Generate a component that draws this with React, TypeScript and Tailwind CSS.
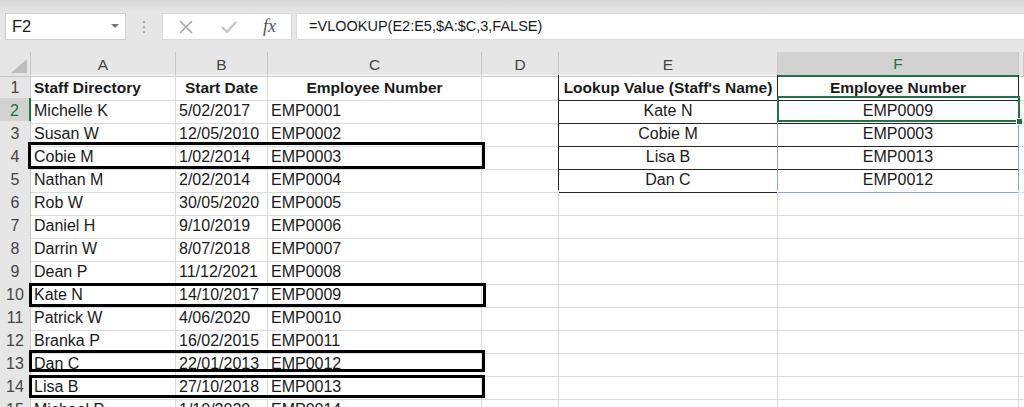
import React from 'react';

type Row = { n: number; cells: string[] };

const rows: Row[] = [
    { n: 1, cells: ['Staff Directory', 'Start Date', 'Employee Number', '', "Lookup Value (Staff's Name)", 'Employee Number'] },
    { n: 2, cells: ['Michelle K', '5/02/2017', 'EMP0001', '', 'Kate N', 'EMP0009'] },
    { n: 3, cells: ['Susan W', '12/05/2010', 'EMP0002', '', 'Cobie M', 'EMP0003'] },
    { n: 4, cells: ['Cobie M', '1/02/2014', 'EMP0003', '', 'Lisa B', 'EMP0013'] },
    { n: 5, cells: ['Nathan M', '2/02/2014', 'EMP0004', '', 'Dan C', 'EMP0012'] },
    { n: 6, cells: ['Rob W', '30/05/2020', 'EMP0005', '', '', ''] },
    { n: 7, cells: ['Daniel H', '9/10/2019', 'EMP0006', '', '', ''] },
    { n: 8, cells: ['Darrin W', '8/07/2018', 'EMP0007', '', '', ''] },
    { n: 9, cells: ['Dean P', '11/12/2021', 'EMP0008', '', '', ''] },
    { n: 10, cells: ['Kate N', '14/10/2017', 'EMP0009', '', '', ''] },
    { n: 11, cells: ['Patrick W', '4/06/2020', 'EMP0010', '', '', ''] },
    { n: 12, cells: ['Branka P', '16/02/2015', 'EMP0011', '', '', ''] },
    { n: 13, cells: ['Dan C', '22/01/2013', 'EMP0012', '', '', ''] },
    { n: 14, cells: ['Lisa B', '27/10/2018', 'EMP0013', '', '', ''] },
    { n: 15, cells: ['Michael P', '1/10/2020', 'EMP0014', '', '', ''] },
];

const GRID = 'grid grid-cols-[31px_145px_92px_214px_77px_219px_241px_5px]';
const letters = ['A', 'B', 'C', 'D', 'E', 'F', ''];

// border colour of a data cell (col index 0..6 = A..G)
function cellBorders(r: number, c: number) {
    const inTable = r <= 5;
    let right = 'border-r-[#dadcdd]';
    let bottom = 'border-b-[#dadcdd]';
    if (inTable && c === 3) right = 'border-r-[#262626]';
    if (inTable && c === 4) {
        right = r <= 2 ? 'border-r-[#262626]' : 'border-r-[#8ba6dc]';
        bottom = 'border-b-[#262626]';
    }
    if (inTable && c === 5) {
        right = r <= 2 ? 'border-r-[#262626]' : 'border-r-[#8ba6dc]';
        bottom = r === 5 ? 'border-b-[#8ba6dc]' : 'border-b-[#262626]';
    }
    return `${right} ${bottom}`;
}

const Caret = () => (
    <svg width="8" height="5" viewBox="0 0 8 5"><path d="M0 0 L8 0 L4 4 Z" fill="#777" /></svg>
);

export default function App() {
    return (
        <div className="relative w-[1024px] h-[407px] overflow-hidden bg-white text-[#1a1a1a] font-['Liberation_Sans',Arial,sans-serif]">
            {/* formula bar */}
            <div className="h-[52px] bg-[#e6e6e6] relative">
                <div className="absolute inset-x-0 top-0 h-[12px] bg-gradient-to-b from-[#d6d6d6] to-[#e6e6e6]" />
                <div className="relative flex items-start pt-[13px] pl-[5px]">
                    <div className="w-[121px] h-[27px] bg-white border border-[#cfcfcf] flex items-center justify-between pl-[6px] pr-[6px] text-[16.5px]">
                        <span>F2</span>
                        <Caret />
                    </div>
                    <div className="w-[36px] h-[27px] flex flex-col items-center justify-center gap-[3px]">
                        <div className="w-[2px] h-[2px] bg-[#a8a8a8]" />
                        <div className="w-[2px] h-[2px] bg-[#a8a8a8]" />
                        <div className="w-[2px] h-[2px] bg-[#a8a8a8]" />
                    </div>
                    <div className="w-[130px] h-[27px] bg-white border border-[#d9d9d9] flex items-center pl-[16px]">
                        <svg width="14" height="14" viewBox="0 0 14 14"><path d="M1 1 L13 13 M13 1 L1 13" stroke="#a6a6a6" strokeWidth="1.6" /></svg>
                        <svg className="ml-[28px]" width="16" height="14" viewBox="0 0 16 14"><path d="M1 7 L6 12 L15 2" stroke="#c4c4c4" strokeWidth="2.2" fill="none" /></svg>
                        <span className="ml-[26px] font-['Liberation_Serif',serif] italic text-[18px] text-[#555]">fx</span>
                    </div>
                    <div className="ml-[4px] flex-1 h-[27px] bg-white border-y border-l border-[#d9d9d9] flex items-center pl-[12px] text-[14.5px]">
                        =VLOOKUP(E2:E5,$A:$C,3,FALSE)
                    </div>
                </div>
            </div>

            {/* column headers */}
            <div className={`${GRID} h-[23px] bg-[#e6e6e6] text-[15.5px] text-[#444]`}>
                <div className="relative border-r border-b border-[#c8c8c8]">
                    <svg className="absolute right-[3px] bottom-[3px]" width="16" height="14" viewBox="0 0 16 14"><path d="M16 0 L16 14 L0 14 Z" fill="#bdbdbd" /></svg>
                </div>
                {letters.map((l, i) =>
                    l === 'F' ? (
                        <div key={i} className="flex items-center justify-center bg-[#d2d2d2] text-[#217346] border-r border-[#c8c8c8] border-b-2 border-b-[#217346]">{l}</div>
                    ) : (
                        <div key={i} className="flex items-center justify-center border-r border-b border-[#c8c8c8]">{l}</div>
                    )
                )}
            </div>

            {/* rows */}
            {rows.map((row) => (
                <div key={row.n} className={`${GRID} h-[23px] text-[16px]`}>
                    <div
                        className={
                            row.n === 2
                                ? 'flex items-center justify-center pt-[1px] bg-[#d2d2d2] text-[#217346] border-r-2 border-r-[#217346] border-b border-b-[#c8c8c8]'
                                : 'flex items-center justify-center pt-[1px] bg-[#e6e6e6] text-[#444] border-r border-b border-[#c8c8c8]'
                        }
                    >
                        {row.n}
                    </div>
                    {row.cells.map((txt, c) => {
                        const bold = row.n === 1;
                        const center = (bold && c === 1) || (bold && c === 2) || (row.n <= 5 && (c === 4 || c === 5));
                        return (
                            <div
                                key={c}
                                className={`flex items-center pt-[1px] whitespace-nowrap overflow-visible border-r border-b ${cellBorders(row.n, c)} ${center ? 'justify-center' : 'pl-[3px]'} ${bold ? 'font-bold text-[15.5px]' : ''}`}
                            >
                                {txt}
                            </div>
                        );
                    })}
                    <div className="border-b border-[#dadcdd]" />
                </div>
            ))}

            {/* active cell F2 */}
            <div className="absolute left-[777px] top-[96px] w-[243px] h-[26px] border-2 border-[#217346]" />
            <div className="absolute left-[1016px] top-[118px] w-[7px] h-[7px] bg-[#217346] border border-white" />

            {/* thick outlines drawn over the sheet */}
            <div className="absolute left-[28px] top-[142px] w-[457px] h-[27px] border-[3px] border-black" />
            <div className="absolute left-[29px] top-[283px] w-[457px] h-[24px] border-[3px] border-black" />
            <div className="absolute left-[29px] top-[350px] w-[456px] h-[22px] border-[3px] border-black" />
            <div className="absolute left-[29px] top-[375px] w-[456px] h-[23px] border-[3px] border-black" />
        </div>
    );
}
